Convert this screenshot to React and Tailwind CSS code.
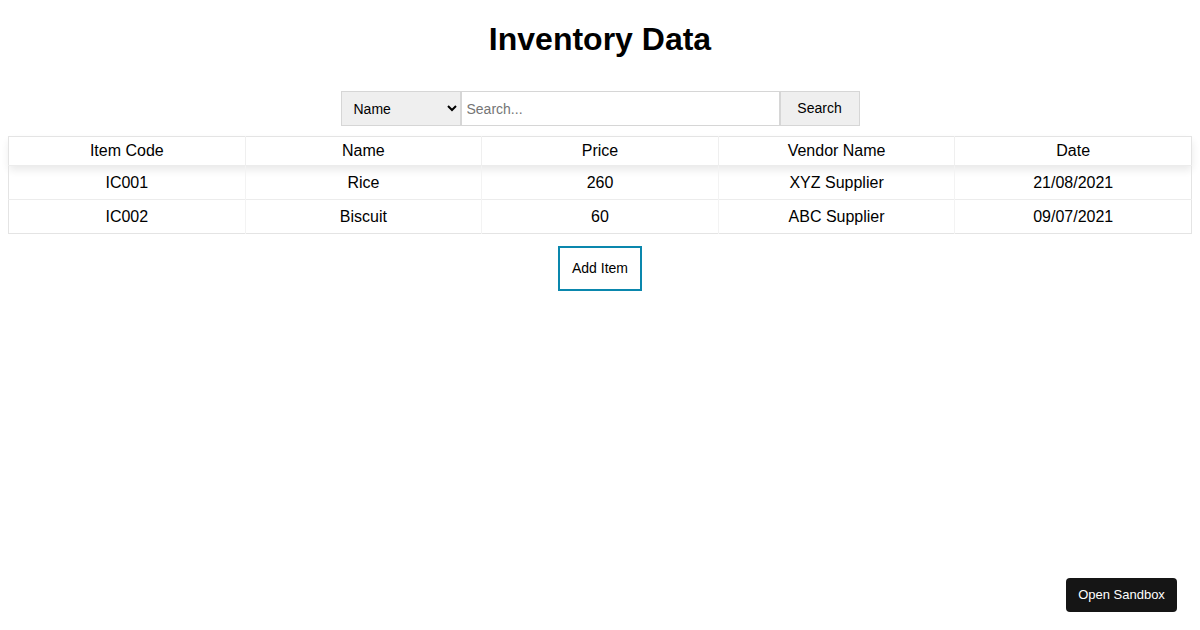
import React, { useState } from 'react';

const items = [
  { code: 'IC001', name: 'Rice', price: 260, vendor: 'XYZ Supplier', date: '21/08/2021' },
  { code: 'IC002', name: 'Biscuit', price: 60, vendor: 'ABC Supplier', date: '09/07/2021' },
];

const headers = ['Item Code', 'Name', 'Price', 'Vendor Name', 'Date'];

const App = () => {
  const [field, setField] = useState('name');
  const [query, setQuery] = useState('');

  return (
    <div className="min-h-[630px] bg-white text-black font-['Liberation_Sans',Arial,sans-serif]">
      <h1 className="pt-[21px] text-center text-[32px] font-bold leading-[37px]">
        Inventory Data
      </h1>

      <div className="mt-[33px] flex justify-center">
        <select
          value={field}
          onChange={(e) => setField(e.target.value)}
          className="h-[35px] w-[120px] border border-[#d6d6d6] bg-[#efefef] pl-[8px] text-[14px] outline-none"
        >
          <option value="name">Name</option>
          <option value="code">Item Code</option>
          <option value="vendor">Vendor Name</option>
        </select>
        <input
          value={query}
          onChange={(e) => setQuery(e.target.value)}
          placeholder="Search..."
          className="h-[35px] w-[319px] border border-[#d6d6d6] px-[5px] text-[14px] outline-none placeholder:text-[#757575]"
        />
        <button className="h-[35px] w-[80px] border border-[#d6d6d6] bg-[#efefef] text-[14px]">
          Search
        </button>
      </div>

      <div className="mx-[8px] mt-[10px]">
        <table className="w-full table-fixed border-collapse border border-[#e4e4e4] text-[16px]">
          <thead>
            <tr className="h-[29px] shadow-[0_4px_8px_rgba(0,0,0,0.09)]">
              {headers.map((h) => (
                <th key={h} className="border-l border-[#efefef] font-normal first:border-l-0">
                  {h}
                </th>
              ))}
            </tr>
          </thead>
          <tbody>
            {items.map((item) => (
              <tr key={item.code} className="h-[34px] border-t border-[#ececec]">
                <td className="text-center">{item.code}</td>
                <td className="border-l border-[#f3f3f3] text-center">{item.name}</td>
                <td className="border-l border-[#f3f3f3] text-center">{item.price}</td>
                <td className="border-l border-[#f3f3f3] text-center">{item.vendor}</td>
                <td className="border-l border-[#f3f3f3] text-center">{item.date}</td>
              </tr>
            ))}
          </tbody>
        </table>
      </div>

      <div className="mt-[12px] flex justify-center">
        <button className="h-[45px] w-[84px] border-2 border-[#0a87ad] bg-white text-[14px]">
          Add Item
        </button>
      </div>

      <button className="fixed bottom-[18px] right-[23px] h-[34px] w-[111px] rounded-[4px] bg-[#151515] text-[13px] text-white">
        Open Sandbox
      </button>
    </div>
  );
};

export default App;
